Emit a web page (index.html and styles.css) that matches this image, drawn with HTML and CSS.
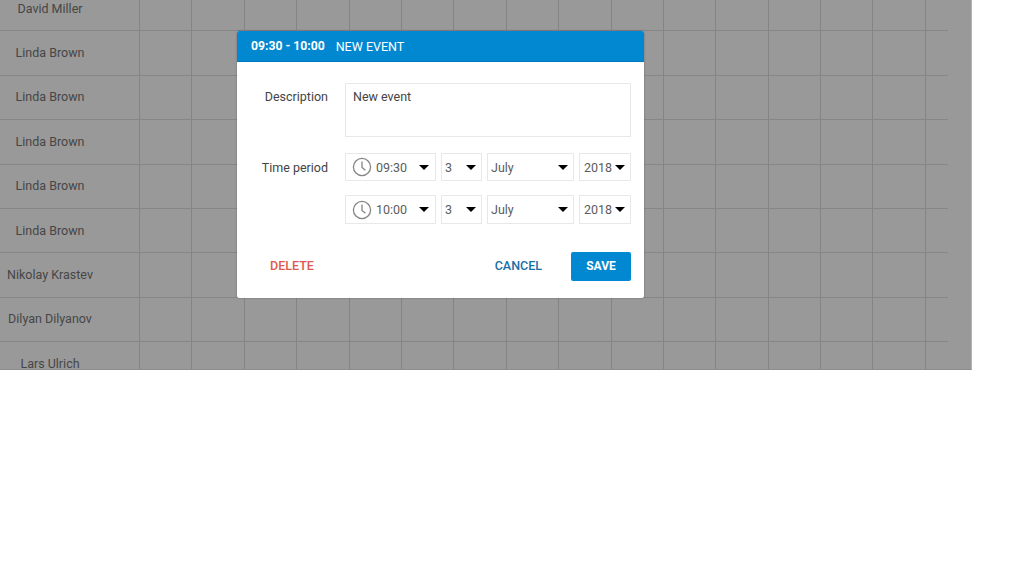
FILE: index.html
```html
<!DOCTYPE html>
<html lang="en">
<head>
<meta charset="utf-8">
<title>Scheduler</title>
<link rel="stylesheet" href="styles.css">
</head>
<body>
<div class="stage">
  <div class="table" id="table"></div>
  <div class="modal">
    <div class="modal-head"><span class="head-time">09:30 - 10:00</span><span class="head-title">NEW EVENT</span></div>
    <div class="modal-body">
      <div class="form-row">
        <div class="label label-desc">Description</div>
        <div class="textarea">New event</div>
      </div>
      <div class="form-row period">
        <div class="label label-time">Time period</div>
        <div class="period-rows">
          <div class="selects">
            <div class="sel sel-time"><svg class="clock" viewBox="0 0 20 20"><circle cx="10" cy="10" r="8.6"/><path d="M10 4.6V10.4L13.4 13.2"/></svg><span>09:30</span><i class="caret"></i></div>
            <div class="sel sel-day"><span>3</span><i class="caret"></i></div>
            <div class="sel sel-month"><span>July</span><i class="caret"></i></div>
            <div class="sel sel-year"><span>2018</span><i class="caret"></i></div>
          </div>
          <div class="selects">
            <div class="sel sel-time"><svg class="clock" viewBox="0 0 20 20"><circle cx="10" cy="10" r="8.6"/><path d="M10 4.6V10.4L13.4 13.2"/></svg><span>10:00</span><i class="caret"></i></div>
            <div class="sel sel-day"><span>3</span><i class="caret"></i></div>
            <div class="sel sel-month"><span>July</span><i class="caret"></i></div>
            <div class="sel sel-year"><span>2018</span><i class="caret"></i></div>
          </div>
        </div>
      </div>
      <div class="actions">
        <button class="btn btn-delete">DELETE</button>
        <button class="btn btn-cancel">CANCEL</button>
        <button class="btn btn-save">SAVE</button>
      </div>
    </div>
  </div>
</div>
<script src="app.js"></script>
</body>
</html>
```
FILE: styles.css
```css
* { box-sizing: border-box; }
html, body { margin: 0; padding: 0; background: #fff; }
body { font-family: Roboto, "Liberation Sans", sans-serif; font-size: 12.5px; color: #444; }
.stage { position: relative; width: 972px; height: 370px; overflow: hidden; background: #999; border-right: 1px solid #b5b5b5; border-bottom: 1px solid #8c8c8c; }
.table { width: 948px; margin-top: -13px; }
.row { display: grid; grid-template-columns: 140px repeat(15, 52.4px) 22px; height: 44.4px; border-bottom: 1px solid #868686; }
.cell { border-right: 1px solid #848484; }
.cell:last-child { border-right: 0; }
.name { display: flex; align-items: center; justify-content: center; padding: 0 39px 1px 0; color: #464646; white-space: nowrap; }
.modal { position: absolute; left: 237px; top: 31px; width: 407px; height: 267px; background: #fff; border-radius: 2px; box-shadow: 0 0 2px rgba(0,0,0,.35); overflow: hidden; }
.modal-head { height: 31px; background: #0288d1; color: #fff; display: flex; align-items: center; padding-left: 14px; border-bottom: 1px solid #0277bd; }
.head-time { font-weight: 700; font-size: 12.2px; margin-right: 11px; }
.modal-body { padding: 21px 13px 0 0; }
.form-row { display: flex; align-items: flex-start; }
.label { width: 91px; text-align: right; margin-right: 17px; color: #444; }
.label-desc { padding-top: 5.5px; }
.label-time { padding-top: 7px; }
.textarea { width: 286px; height: 54px; border: 1px solid #e8e8e8; padding: 5px 7px; }
.period { margin-top: 16px; }
.period-rows { display: flex; flex-direction: column; gap: 14px; }
.selects { display: flex; gap: 5px; }
.selects + .selects .sel { height: 29px; }
.sel { display: flex; align-items: center; height: 28px; border: 1px solid #e8e8e8; color: #5c5c5c; padding-left: 3px; }
.sel-time { width: 91px; padding-left: 6px; }
.sel-day { width: 41px; }
.sel-month { width: 87px; }
.sel-year { width: 52px; padding-left: 4px; }
.clock { width: 20px; height: 20px; margin-right: 4px; fill: none; stroke: #858585; stroke-width: 1.3; }
.caret { margin-left: auto; width: 0; height: 0; border-left: 5px solid transparent; border-right: 5px solid transparent; border-top: 5px solid #000; }
.sel-time .caret { margin-right: 6px; }
.sel-day .caret { margin-right: 5px; }
.sel-month .caret { margin-right: 5px; }
.sel-year .caret { margin-right: 5px; }
.actions { display: flex; align-items: center; margin-top: 28px; padding-left: 33px; }
.btn { font-family: inherit; font-size: 12.5px; font-weight: 500; background: none; border: 0; padding: 0 0 2px; height: 29px; cursor: pointer; }
.btn-delete { color: #dc5a50; width: 44px; }
.btn-cancel { color: #1a6ea5; margin-left: auto; margin-right: 29px; }
.btn-save { background: #0288d1; color: #fff; width: 60px; border-radius: 2px; font-weight: 700; font-size: 12px; }
```
FILE: app.js
```js
const names = ["David Miller","Linda Brown","Linda Brown","Linda Brown","Linda Brown","Linda Brown","Nikolay Krastev","Dilyan Dilyanov","Lars Ulrich"];
const table = document.getElementById("table");
names.forEach(function (n) {
  const row = document.createElement("div");
  row.className = "row";
  const name = document.createElement("div");
  name.className = "cell name";
  name.textContent = n;
  row.appendChild(name);
  for (let i = 0; i < 16; i++) {
    const c = document.createElement("div");
    c.className = "cell";
    row.appendChild(c);
  }
  table.appendChild(row);
});
```
